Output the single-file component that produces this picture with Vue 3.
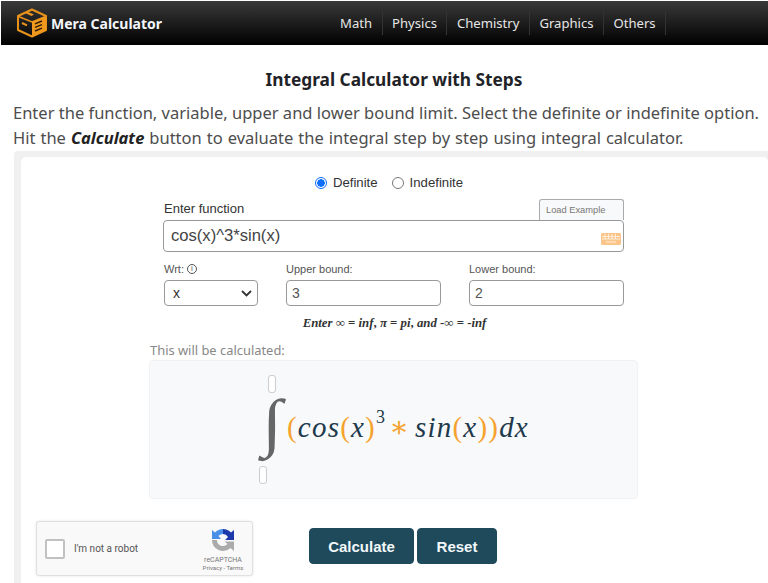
<script setup>
const nav = ['Math', 'Physics', 'Chemistry', 'Graphics', 'Others']
</script>

<template>
  <div class="page">
    <header class="bar">
      <div class="brand">
        <svg class="logo" width="32" height="30" viewBox="0 0 32 30">
          <path d="M16 1.5 L30 8 V22 L16 28.5 L2 22 V8 Z" fill="none" stroke="#e8921c" stroke-width="2" stroke-linejoin="round"/>
          <path d="M2.5 8.5 L16 14 L29.5 8.5" fill="none" stroke="#e8921c" stroke-width="1.6"/>
          <path d="M16 14 L30 8.5 V22 L16 28.5 Z" fill="#f0981e"/>
          <path d="M11 3.6 L18 6.6 L15.5 8 L9 5 Z" fill="#e8921c"/>
          <path d="M6 15 L11 17.4" stroke="#e8921c" stroke-width="2"/>
          <path d="M19 15.8 L26 13 M19 19.4 L26 16.6 M19 23 L26 20.2" stroke="#2a1c08" stroke-width="1.4"/>
        </svg>
        <span>Mera Calculator</span>
      </div>
      <nav class="nav">
        <a v-for="n in nav" :key="n" class="nav-item">{{ n }}</a>
      </nav>
    </header>

    <h1 class="title">Integral Calculator with Steps</h1>
    <div class="intro">
      <p class="line first">Enter the function, variable, upper and lower bound limit. Select the definite or indefinite option.</p>
      <p class="line second">Hit the <b><i>Calculate</i></b> button to evaluate the integral step by step using integral calculator.</p>
    </div>

    <section class="shell">
      <div class="card">
        <div class="radios">
          <label class="radio"><span class="dot on"></span>Definite</label>
          <label class="radio"><span class="dot"></span>Indefinite</label>
        </div>

        <div class="form">
          <div class="fn-head">
            <span class="fn-label">Enter function</span>
            <button class="example">Load Example</button>
          </div>
          <div class="fn-input">
            <span>cos(x)^3*sin(x)</span>
            <svg class="kbd" width="20" height="12" viewBox="0 0 20 12">
              <rect width="20" height="12" rx="1.5" fill="#fbc58a"/>
              <path d="M1 3.5H19M1 6H19M4 1V6M7.500 1V6M11 1V6M14.500 1V6M5 9H15" stroke="#fdeeda" stroke-width="1"/>
            </svg>
          </div>

          <div class="bounds">
            <div class="wrt">
              <div class="small-label">Wrt: <span class="info">i</span></div>
              <div class="box select">
                <span>x</span>
                <svg width="11" height="7" viewBox="0 0 11 7"><path d="M1 1 L5.500 5.500 L10 1" fill="none" stroke="#333" stroke-width="1.800"/></svg>
              </div>
            </div>
            <div class="upper">
              <div class="small-label">Upper bound:</div>
              <div class="box num">3</div>
            </div>
            <div class="lower">
              <div class="small-label">Lower bound:</div>
              <div class="box num">2</div>
            </div>
          </div>

          <div class="hint"><i>Enter</i> ∞ = <i>inf</i>, <i>π</i> = <i>pi</i>, <i>and</i> -∞ = -<i>inf</i></div>
        </div>

        <div class="preview-wrap">
          <div class="preview-label">This will be calculated:</div>
          <div class="preview">
            <div class="integral">
              <span class="limit up"></span>
              <span class="int-sign">∫</span>
              <span class="limit down"></span>
            </div>
            <div class="expr"><span class="o">(</span><i>cos</i><span class="o">(</span><i>x</i><span class="o">)</span><sup>3</sup><span class="o star">∗</span><i>sin</i><span class="o">(</span><i>x</i><span class="o">))</span><i>dx</i></div>
          </div>
        </div>

        <div class="actions">
          <div class="captcha">
            <span class="check"></span>
            <span class="robot">I'm not a robot</span>
            <div class="rc">
              <svg width="24" height="24" viewBox="0 0 24 24">
                <path d="M12 1 A11 11 0 0 1 20 4.500 L23 2 V12 H14 L17 9 A6 6 0 0 0 12 6 Z" fill="#1c3aa9"/>
                <path d="M12 1 V6 A6 6 0 0 0 7.500 8 L10 11 H1 V2 L4 4.500 A11 11 0 0 1 12 1 Z" fill="#4a90e8"/>
                <path d="M1 12 H6 A6 6 0 0 0 16.500 16 L13.500 13.500 H23 V23 L19.500 20 A11 11 0 0 1 1 12 Z" fill="#ababab"/>
              </svg>
              <div class="rc-name">reCAPTCHA</div>
              <div class="rc-links">Privacy - Terms</div>
            </div>
          </div>
          <div class="btns">
            <button class="btn calc">Calculate</button>
            <button class="btn reset">Reset</button>
          </div>
        </div>
      </div>
    </section>
  </div>
</template>

<style>
html, body { margin: 0; background: #fff; overflow: hidden; }
</style>

<style scoped>
.page {
  width: 768px;
  height: 583px;
  overflow: hidden;
  box-sizing: border-box;
  padding-top: 1px;
  font-family: "Noto Sans", "Open Sans", sans-serif;
  color: #212529;
}
.bar {
  height: 44px;
  margin-left: 1px;
  background: linear-gradient(#3a3a3a, #000);
  display: flex;
  align-items: center;
  color: #fff;
}
.brand {
  display: flex;
  align-items: center;
  gap: 3px;
  padding-left: 15px;
  width: 308px;
  font-size: 14px;
  font-weight: 700;
  color: #f4f6fa;
}
.logo { flex: none; }
.nav { display: flex; align-items: center; }
.nav-item {
  font-size: 13.100px;
  color: #e6e6e6;
  padding: 0 9.500px;
  line-height: 24px;
  border-right: 1px solid #333;
}
.nav-item:first-child { padding-left: 16px; }
.title {
  margin: 24px 0 0;
  font-size: 17.300px;
  line-height: 22px;
  font-weight: 700;
  text-align: center;
  padding-left: 20px;
  color: #1f2328;
}
.intro {
  margin: 10px 9px 0 13px;
  font-size: 16.500px;
  line-height: 24.500px;
  color: #4d4d4d;
}
.line { margin: 0; white-space: nowrap; }
.first { text-align: justify; text-align-last: justify; white-space: normal; }
.second { word-spacing: 0.700px; }
.intro b { color: #222; }
.shell {
  margin: 1px 0 0 14px;
  background: #f0f0f0;
  padding: 6px 0 0 7px;
  border-radius: 4px 0 0 0;
}
.card {
  background: #fff;
  border-radius: 5px 5px 0 0;
  height: 430px;
  font-family: "Liberation Sans", Arial, sans-serif;
  color: #444;
}
.radios {
  display: flex;
  justify-content: center;
  gap: 14px;
  padding-top: 18px;
  padding-right: 11px;
  font-size: 13.200px;
  line-height: 16px;
}
.radio { display: flex; align-items: center; gap: 6px; color: #333; }
.dot {
  width: 12px;
  height: 12px;
  border-radius: 50%;
  border: 1px solid #777;
  box-sizing: border-box;
  background: #fff;
}
.dot.on {
  border: 1px solid #0d6efd;
  background: radial-gradient(circle, #0d6efd 0 3.500px, #fff 4px);
}
.form { width: 461px; margin-left: 142px; }
.fn-head {
  margin-top: 8px;
  height: 21px;
  display: flex;
  justify-content: space-between;
  align-items: flex-end;
}
.fn-label { font-size: 13px; line-height: 20px; color: #333; margin: 0 0 1px 1px; }
.example {
  width: 85px;
  height: 21px;
  padding: 0 0 0 6px;
  text-align: left;
  font: 9.300px "Liberation Sans", Arial, sans-serif;
  color: #777;
  background: #f8f9fa;
  border: 1px solid #aaa;
  border-bottom: 0;
  border-radius: 3px 3px 0 0;
}
.fn-input {
  height: 32px;
  box-sizing: border-box;
  border: 1px solid #999;
  border-radius: 4px;
  display: flex;
  align-items: center;
  justify-content: space-between;
  padding: 0 2px 0 7px;
  font-size: 16.600px;
  color: #444;
}
.kbd { margin-top: 5px; }
.bounds { display: flex; margin: 10px 0 0 1px; }
.wrt { width: 94px; }
.upper { width: 155px; margin-left: 28px; }
.lower { width: 155px; margin-left: 28px; }
.small-label { font-size: 11px; line-height: 14px; color: #555; display: flex; gap: 3px; align-items: center; white-space: nowrap; }
.info {
  width: 10px;
  height: 10px;
  border: 1px solid #555;
  border-radius: 50%;
  box-sizing: border-box;
  font-size: 8px;
  line-height: 8px;
  text-align: center;
}
.box {
  margin-top: 4px;
  height: 26px;
  box-sizing: border-box;
  border: 1px solid #999;
  border-radius: 4px;
  display: flex;
  align-items: center;
  font-size: 14px;
  color: #555;
}
.select { justify-content: space-between; padding: 0 5px 0 8px; color: #333; }
.num { padding-left: 5px; }
.hint {
  margin-top: 10px;
  text-align: center;
  font: 700 12.800px/14px "Liberation Serif", "DejaVu Serif", serif;
  color: #333;
  padding-left: 2px;
}
.preview-wrap { margin: 12px 0 0 128px; width: 489px; }
.preview-label {
  font: 12.900px/16px "Noto Sans", "Open Sans", sans-serif;
  color: #888;
  padding-left: 1px;
}
.preview {
  margin-top: 2px;
  height: 139px;
  background: #f8f9fa;
  border: 1px solid #f1f2f4;
  border-radius: 4px;
  box-sizing: border-box;
  display: flex;
  align-items: center;
  padding-left: 110px;
  color: #1e3a4c;
}
.integral { position: relative; width: 27px; height: 137px; }
.int-sign {
  position: absolute;
  left: 2px;
  top: 18px;
  font: italic 64px/88px "Liberation Serif", "DejaVu Serif", serif;
  color: #666;
  transform: scaleX(1.15);
  transform-origin: left;
}
.limit {
  position: absolute;
  width: 8px;
  height: 18px;
  border: 1px solid #ccc;
  border-radius: 3px;
  box-sizing: border-box;
  background: #fff;
}
.limit.up { left: 8px; top: 14px; }
.limit.down { left: -1px; top: 105px; }
.expr {
  font: 29px/34px "Liberation Serif", "DejaVu Serif", serif;
  letter-spacing: 1.200px;
  white-space: nowrap;
  margin-bottom: 6px;
}
.expr sup { font-size: 18px; line-height: 0; vertical-align: 14px; }
.o { color: #f5a32e; }
.star { margin: 0 5px 0 3px; }
.actions { display: flex; align-items: flex-start; margin: 22px 0 0 15px; }
.captcha {
  width: 217px;
  height: 55px;
  box-sizing: border-box;
  background: #f9f9f9;
  border: 1px solid #e0e0e0;
  border-radius: 3px;
  box-shadow: 0 0 3px rgba(0,0,0,.1);
  display: flex;
  align-items: center;
  padding: 0 3px 0 8px;
}
.check {
  width: 20px;
  height: 20px;
  box-sizing: border-box;
  background: #fff;
  border: 2px solid #c1c1c1;
  border-radius: 2px;
}
.robot { margin-left: 9px; font: 10px "Roboto", sans-serif; color: #555; }
.rc {
  margin: 2px 0 0 auto;
  width: 52px;
  display: flex;
  flex-direction: column;
  align-items: center;
  font-family: "Roboto", sans-serif;
  color: #777;
}
.rc-name { font-size: 7px; line-height: 8px; margin-top: 4px; }
.rc-links { font-size: 6px; line-height: 8px; }
.btns { display: flex; gap: 3px; margin: 7px 0 0 56px; }
.btn {
  height: 36px;
  border: 1px solid #1f4a5c;
  border-radius: 4px;
  background: #1f4a5c;
  color: #f2f8fa;
  font: 700 15px "Liberation Sans", Arial, sans-serif;
  padding: 0;
}
.calc { width: 105px; }
.reset { width: 80px; }
</style>
